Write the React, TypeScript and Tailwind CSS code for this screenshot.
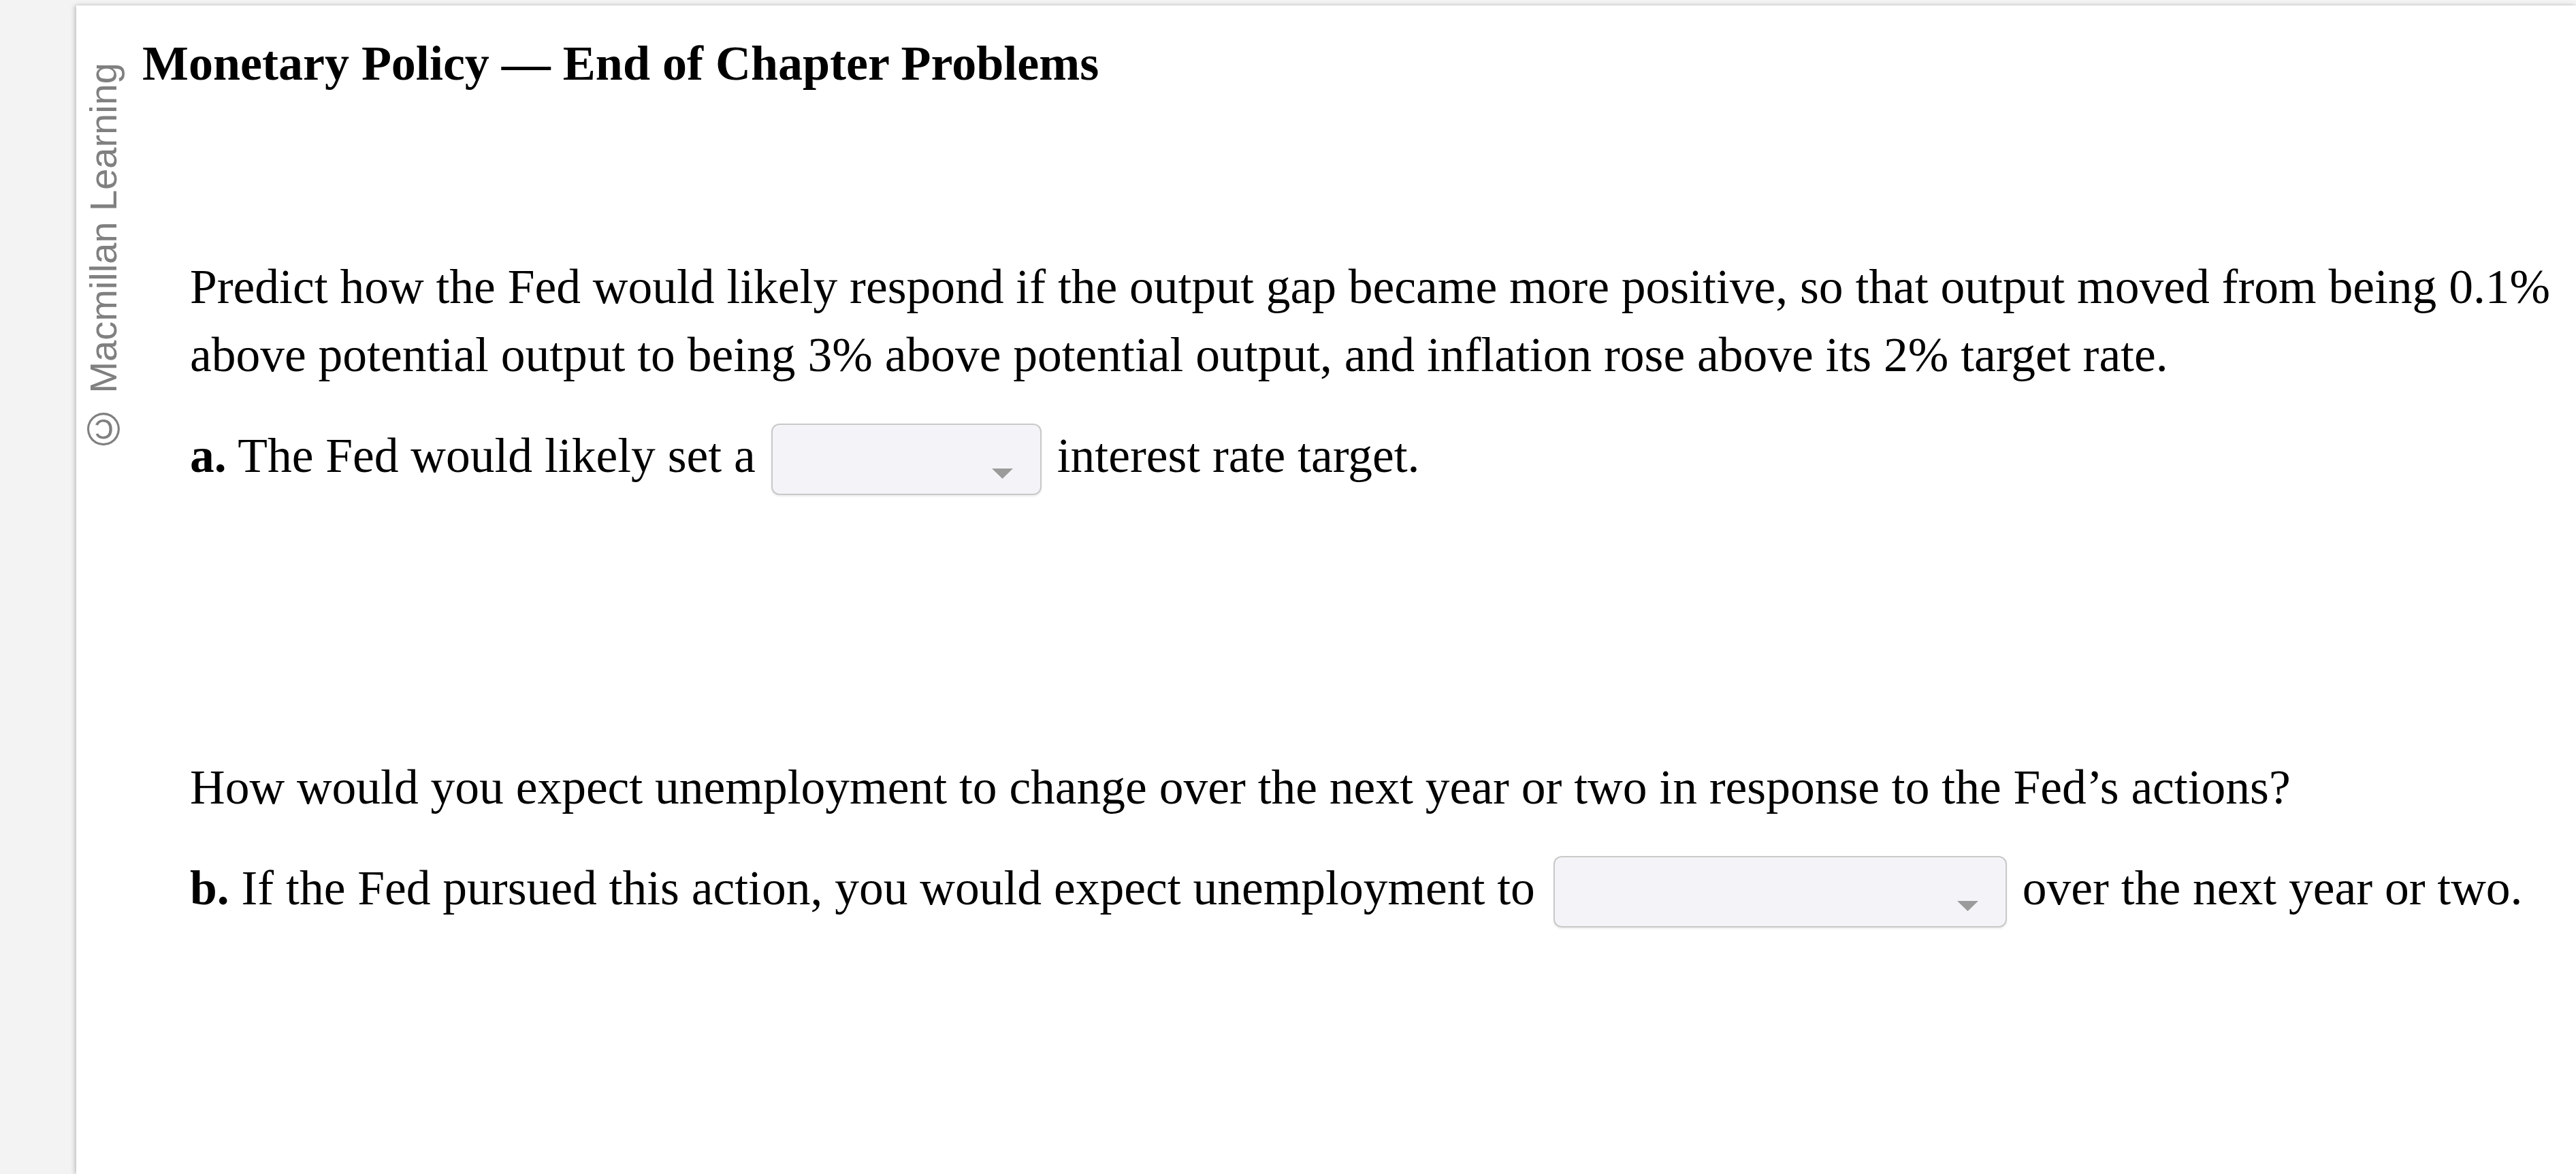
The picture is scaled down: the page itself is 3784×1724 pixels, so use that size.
import clsx from "clsx";

function Dropdown({ className }: { className?: string }) {
  return (
    <div
      className={clsx(
        "mt-[3px] flex h-[105px] shrink-0 items-end justify-end rounded-[12px] border-2 border-[#c9c9c9] bg-[#f4f4f8] pr-[40px] pb-[22px] shadow-[0_2px_3px_rgba(0,0,0,0.08)]",
        className
      )}
    >
      <svg width="31" height="15" viewBox="0 0 31 15">
        <path d="M0 0h31L15.5 15z" fill="#9b9b9b" />
      </svg>
    </div>
  );
}

export default function App() {
  return (
    <div className="flex h-screen w-full overflow-hidden bg-[#f3f3f3] pt-2 pl-[112px] font-['Liberation_Serif',serif] text-black">
      <main className="flex flex-1 bg-white shadow-[-3px_0_6px_rgba(0,0,0,0.16),0_-1px_4px_rgba(0,0,0,0.08)]">
        <div className="ml-[8px] mt-[84px] self-start rotate-180 whitespace-nowrap font-['Liberation_Sans',sans-serif] text-[56px] leading-[64px] text-[#808080] [writing-mode:vertical-rl]">
          <span className="text-[68px]">©</span> Macmillan Learning
        </div>

        <div className="ml-[25px] flex-1 pt-[45px]">
          <h1 className="whitespace-nowrap text-[72px] leading-[80px] font-bold">
            Monetary Policy — End of Chapter Problems
          </h1>

          <div className="pl-[70px] text-[71.5px] leading-[100px]">
            <p className="mt-[238px] whitespace-nowrap">
              Predict how the Fed would likely respond if the output gap became more positive, so that output moved from being 0.1%
              <br />
              above potential output to being 3% above potential output, and inflation rose above its 2% target rate.
            </p>

            <div className="mt-[48px] flex items-start gap-[23px] whitespace-nowrap">
              <span>
                <b>a.</b> The Fed would likely set a
              </span>
              <Dropdown className="w-[397px]" />
              <span>interest rate target.</span>
            </div>

            <p className="mt-[379px] whitespace-nowrap">
              How would you expect unemployment to change over the next year or two in response to the Fed’s actions?
            </p>

            <div className="mt-[48px] flex items-start gap-[23px] whitespace-nowrap">
              <span>
                <b>b.</b> If the Fed pursued this action, you would expect unemployment to
              </span>
              <Dropdown className="ml-[4px] w-[666px]" />
              <span>over the next year or two.</span>
            </div>
          </div>
        </div>
      </main>
    </div>
  );
}
